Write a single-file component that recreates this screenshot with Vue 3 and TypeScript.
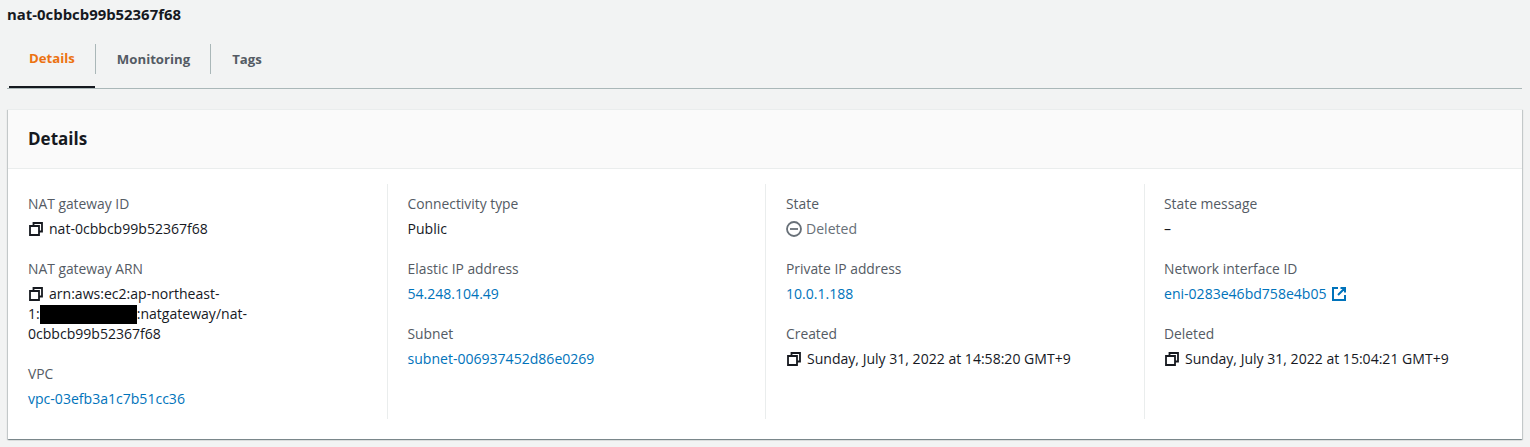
<script setup lang="ts">
interface Item {
  label: string
  value: string
  kind?: 'copy' | 'link' | 'state' | 'ext' | 'arn'
}
const columns: Item[][] = [
  [
    { label: 'NAT gateway ID', value: 'nat-0cbbcb99b52367f68', kind: 'copy' },
    { label: 'NAT gateway ARN', value: '', kind: 'arn' },
    { label: 'VPC', value: 'vpc-03efb3a1c7b51cc36', kind: 'link' }
  ],
  [
    { label: 'Connectivity type', value: 'Public' },
    { label: 'Elastic IP address', value: '54.248.104.49', kind: 'link' },
    { label: 'Subnet', value: 'subnet-006937452d86e0269', kind: 'link' }
  ],
  [
    { label: 'State', value: 'Deleted', kind: 'state' },
    { label: 'Private IP address', value: '10.0.1.188', kind: 'link' },
    { label: 'Created', value: 'Sunday, July 31, 2022 at 14:58:20 GMT+9', kind: 'copy' }
  ],
  [
    { label: 'State message', value: '–' },
    { label: 'Network interface ID', value: 'eni-0283e46bd758e4b05', kind: 'ext' },
    { label: 'Deleted', value: 'Sunday, July 31, 2022 at 15:04:21 GMT+9', kind: 'copy' }
  ]
]
</script>

<template>
  <div class="page">
    <div class="title">nat-0cbbcb99b52367f68</div>
    <nav class="tabs">
      <div class="tab active"><span>Details</span></div>
      <div class="tab"><span>Monitoring</span></div>
      <div class="tab last"><span>Tags</span></div>
    </nav>
    <section class="card">
      <header class="card-head"><h2>Details</h2></header>
      <div class="grid">
        <div v-for="(col, i) in columns" :key="i" class="col">
          <div v-for="item in col" :key="item.label" class="item">
            <div class="label">{{ item.label }}</div>
            <div v-if="item.kind === 'copy'" class="value">
              <svg class="icon copy" viewBox="0 0 14 14"><path d="M1 4h9v9H1zM4.500 4V1H13v8.500h-3" /></svg>{{ item.value }}
            </div>
            <div v-else-if="item.kind === 'arn'" class="value arn">
              <svg class="icon copy" viewBox="0 0 14 14"><path d="M1 4h9v9H1zM4.500 4V1H13v8.500h-3" /></svg>arn:aws:ec2:ap-northeast-<br />1:<span class="redact"></span>:natgateway/nat-<br />0cbbcb99b52367f68
            </div>
            <div v-else-if="item.kind === 'state'" class="value state">
              <svg class="icon state-icon" viewBox="0 0 16 16"><circle cx="8" cy="8" r="7" /><path d="M4 8h8" /></svg>{{ item.value }}
            </div>
            <div v-else-if="item.kind === 'link'" class="value link">{{ item.value }}</div>
            <div v-else-if="item.kind === 'ext'" class="value link">
              {{ item.value }}<svg class="icon ext" viewBox="0 0 14 14"><path d="M6 1H1v12h12V8M8.500 1H13v4.500M13 1L6 8" /></svg>
            </div>
            <div v-else class="value">{{ item.value }}</div>
          </div>
        </div>
      </div>
    </section>
  </div>
</template>

<style>
html, body { margin: 0; background: #f2f3f3; }
</style>

<style scoped>
.page {
  width: 1530px;
  height: 447px;
  box-sizing: border-box;
  padding: 4px 8px 0 7px;
  background: #f2f3f3;
  font-family: "Open Sans", "Noto Sans", sans-serif;
  font-size: 14px;
  line-height: 20px;
  color: #16191f;
  overflow: hidden;
}
.title {
  font-size: 14.900px;
  font-weight: 700;
  line-height: 20px;
}
.tabs {
  display: flex;
  margin-top: 15px;
  height: 49px;
  border-bottom: 1px solid #aab7b8;
}
.tab {
  position: relative;
  height: 49px;
  padding: 0 20px 9px 22px;
  display: flex;
  align-items: center;
  font-size: 13.200px;
  font-weight: 700;
  color: #545b64;
  box-sizing: border-box;
}
.tab:first-child { margin-left: 2px; padding: 0 20px 9px 20px; }
.tab::after {
  content: "";
  position: absolute;
  right: -1px;
  top: 5px;
  height: 30px;
  width: 1px;
  background: #aab7b8;
}
.tab.last::after { display: none; }
.tab.active { color: #ec7211; border-bottom: 2px solid #16191f; }
.card {
  margin-top: 20px;
  margin-left: 1px;
  width: 1514px;
  height: 330px;
  box-sizing: border-box;
  background: #fff;
  border-top: 1px solid #eaeded;
  box-shadow: 0 1px 1px 0 rgba(0, 28, 36, 0.3), 1px 1px 1px 0 rgba(0, 28, 36, 0.15), -1px 1px 1px 0 rgba(0, 28, 36, 0.15);
}
.card-head {
  height: 59px;
  box-sizing: border-box;
  background: #fafafa;
  border-bottom: 1px solid #eaeded;
  display: flex;
  align-items: center;
  padding-left: 20px;
}
.card-head h2 {
  margin: 0;
  font-size: 17px;
  font-weight: 700;
  line-height: 22px;
}
.grid {
  display: grid;
  grid-template-columns: 380px 378px 379px 377px;
  padding-top: 15px;
}
.col {
  height: 235px;
  padding: 10px 20px 0;
  box-sizing: border-box;
  border-right: 1px solid #eaeded;
}
.col:nth-child(2) { padding-left: 19.500px; }
.col:last-child { border-right: none; padding-left: 19px; }
.item { margin-bottom: 20px; }
.label { color: #545b64; height: 20px; margin-bottom: 5px; white-space: nowrap; font-size: 13.850px; }
.value { display: flex; align-items: center; min-height: 20px; white-space: nowrap; font-size: 14.050px; }
.arn { display: block; }
.link { color: #0073bb; }
.state { color: #687078; }
.icon { flex: none; fill: none; stroke: currentColor; }
.copy { width: 14px; height: 14px; margin: 0 6px 0 1px; color: #16191f; stroke-width: 1.800; vertical-align: -2px; }
.state-icon { width: 16px; height: 16px; margin-right: 4px; stroke-width: 1.800; }
.ext { width: 14px; height: 14px; margin-left: 5px; stroke-width: 2; }
.redact {
  display: inline-block;
  width: 97px;
  height: 19px;
  background: #000;
  vertical-align: -5px;
}
</style>
